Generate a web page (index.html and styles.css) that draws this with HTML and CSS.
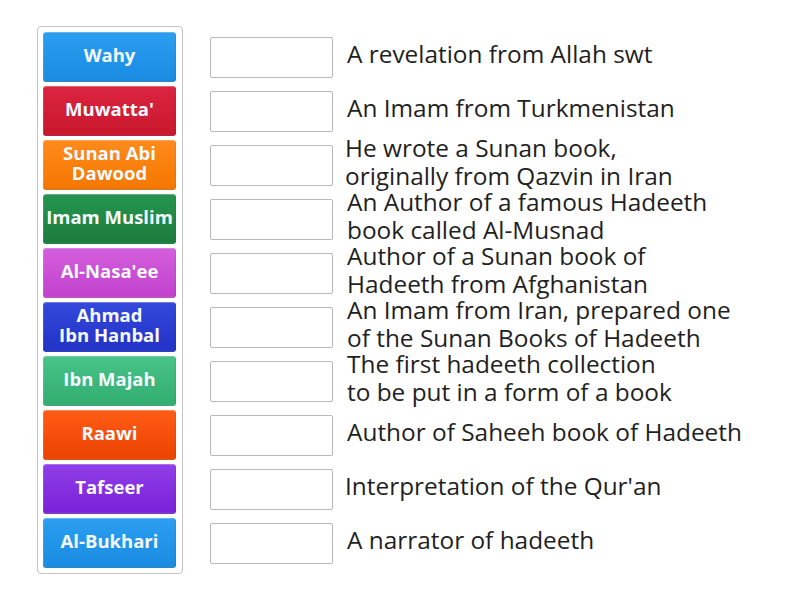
FILE: index.html
```html
<!DOCTYPE html>
<html>
<head>
<meta charset="utf-8">
<link rel="stylesheet" href="styles.css">
</head>
<body>
<div class="page">
  <div class="bank">
    <div class="tile c-blue">Wahy</div>
    <div class="tile c-red">Muwatta'</div>
    <div class="tile c-orange">Sunan Abi<br>Dawood</div>
    <div class="tile c-green">Imam Muslim</div>
    <div class="tile c-pink">Al-Nasa'ee</div>
    <div class="tile c-indigo">Ahmad<br>Ibn Hanbal</div>
    <div class="tile c-mint">Ibn Majah</div>
    <div class="tile c-vermilion">Raawi</div>
    <div class="tile c-violet">Tafseer</div>
    <div class="tile c-blue">Al-Bukhari</div>
  </div>
  <div class="rows">
    <div class="row"><div class="slot"></div><div class="def">A revelation from Allah swt</div></div>
    <div class="row"><div class="slot"></div><div class="def">An Imam from Turkmenistan</div></div>
    <div class="row"><div class="slot"></div><div class="def shift">He wrote a Sunan book,<br>originally from Qazvin in Iran</div></div>
    <div class="row"><div class="slot"></div><div class="def">An Author of a famous Hadeeth<br>book called Al-Musnad</div></div>
    <div class="row"><div class="slot"></div><div class="def">Author of a Sunan book of<br>Hadeeth from Afghanistan</div></div>
    <div class="row"><div class="slot"></div><div class="def">An Imam from Iran, prepared one<br>of the Sunan Books of Hadeeth</div></div>
    <div class="row"><div class="slot"></div><div class="def">The first hadeeth collection<br>to be put in a form of a book</div></div>
    <div class="row"><div class="slot"></div><div class="def">Author of Saheeh book of Hadeeth</div></div>
    <div class="row"><div class="slot"></div><div class="def shift">Interpretation of the Qur'an</div></div>
    <div class="row"><div class="slot"></div><div class="def">A narrator of hadeeth</div></div>
  </div>
</div>
</body>
</html>
```
FILE: styles.css
```css
html, body {
  margin: 0;
  padding: 0;
  background: #ffffff;
}
body {
  font-family: "Open Sans", "DejaVu Sans", sans-serif;
  width: 800px;
  height: 600px;
  overflow: hidden;
}
.page {
  display: flex;
  align-items: flex-start;
  padding: 26px 0 0 37px;
}
.bank {
  display: flex;
  flex-direction: column;
  gap: 4px;
  padding: 5px 6px 5px 5px;
  border: 1px solid #c4c4c4;
  border-radius: 4px;
}
.tile {
  width: 133px;
  height: 50px;
  box-sizing: border-box;
  padding-bottom: 3px;
  border-radius: 3px;
  display: flex;
  align-items: center;
  justify-content: center;
  text-align: center;
  color: #f4faff;
  font-weight: 700;
  font-size: 18.5px;
  line-height: 20px;
  border-top: 1px solid rgba(255,255,255,0.35);
  border-bottom: 2px solid rgba(0,0,0,0.12);
  box-shadow: inset 1px 0 0 rgba(255,255,255,0.12), inset -1px 0 0 rgba(0,0,0,0.06);
}
.c-blue { background: linear-gradient(#2a9ef0, #1a8ce2); }
.c-red { background: linear-gradient(#dc2440, #c8182e); }
.c-orange { background: linear-gradient(#ff8a1c, #f57800); }
.c-green { background: linear-gradient(#25954e, #1c7c3e); }
.c-pink { background: linear-gradient(#d45edc, #c242ce); }
.c-indigo { background: linear-gradient(#3448dc, #2233c6); }
.c-mint { background: linear-gradient(#48c488, #33ad70); }
.c-vermilion { background: linear-gradient(#ff5c16, #ec4300); }
.c-violet { background: linear-gradient(#903ee8, #7a22d8); }

.rows {
  display: flex;
  flex-direction: column;
  gap: 4px;
  padding: 6px 0 0 27px;
}
.row {
  height: 50px;
  display: flex;
  align-items: center;
}
.slot {
  width: 123px;
  height: 41px;
  box-sizing: border-box;
  border: 1px solid #b8b8b8;
  border-radius: 2px;
  background: #ffffff;
  flex: none;
}
.def {
  margin-left: 14px;
  padding-bottom: 7px;
  font-size: 24.4px;
  line-height: 27.5px;
  color: #1f1f1f;
  white-space: nowrap;
}
.def.shift {
  margin-left: 12px;
}
```
